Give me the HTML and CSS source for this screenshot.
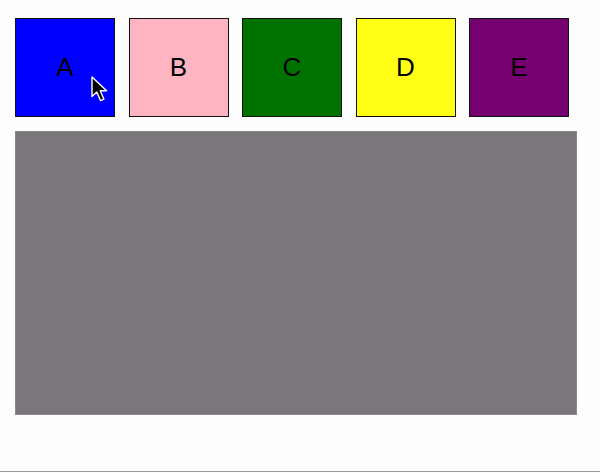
FILE: index.html
```html
<!DOCTYPE html>
<html>
<head>
<meta charset="utf-8">
<link rel="stylesheet" href="styles.css">
</head>
<body>
<div class="page">
  <div class="row">
    <div class="box blue">A
      <svg class="cursor" width="18" height="27" viewBox="0 0 18 27"><path d="M1 1 L1 20.5 L5.8 16 L9.6 24.6 L12.9 23.2 L9.2 14.8 L15.6 14.8 Z" fill="#000" stroke="#fff" stroke-width="1.4" stroke-linejoin="round"/></svg>
    </div>
    <div class="box pink">B</div>
    <div class="box green">C</div>
    <div class="box yellow">D</div>
    <div class="box purple">E</div>
  </div>
  <div class="panel"></div>
</div>
<div class="edge"></div>
</body>
</html>
```
FILE: styles.css
```css
html, body { margin: 0; padding: 0; background: #fdfdfd; }
body { width: 600px; height: 473px; position: relative; overflow: hidden; font-family: "Liberation Sans", Arial, sans-serif; }
.page { padding: 18px 0 0 15px; }
.row { display: flex; gap: 13.5px; }
.box {
  position: relative;
  box-sizing: border-box;
  width: 100px; height: 99px;
  border: 1px solid #111;
  display: flex; align-items: center; justify-content: center;
  font-size: 26px; color: #000;
}
.blue { background: #0000fe; }
.pink { background: #ffb5c1; }
.green { background: #007200; }
.yellow { background: #ffff16; }
.purple { background: #760070; }
.cursor { position: absolute; left: 75px; top: 57px; }
.panel {
  margin-top: 14px;
  box-sizing: border-box;
  width: 562px; height: 284px;
  background: #797779;
  border: 1px solid #8c8a8c;
}
.edge { position: absolute; left: 0; top: 471px; width: 600px; height: 1px; background: #9a9a9a; }
```
